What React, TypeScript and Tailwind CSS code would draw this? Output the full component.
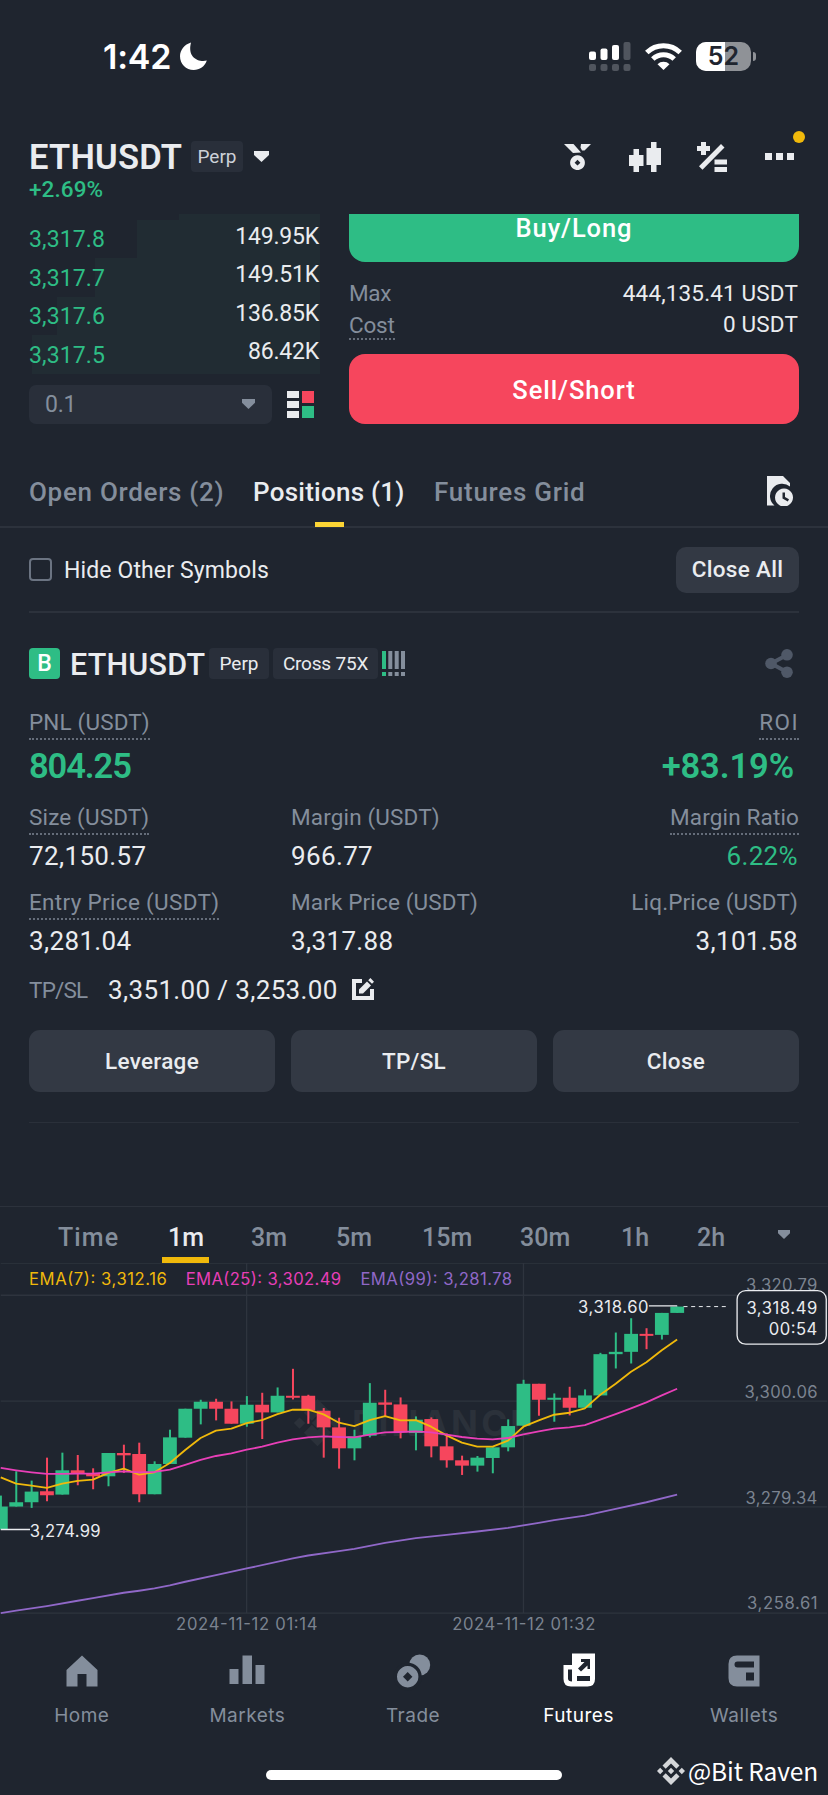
import React from "react";

const UI = "font-[Roboto,'Liberation_Sans',sans-serif]";

/* ---------- chart data: [high, bodyTop, bodyBottom, low, rising] ---------- */
const CANDLES: [number, number, number, number, 0 | 1][] = [
  [918, 951, 1019, 1019, 1], [845, 938, 951, 951, 1], [873, 906, 938, 955, 1], [804, 905, 917, 935, 0],
  [789, 842, 915, 915, 1], [796, 842, 853, 887, 0], [836, 851, 860, 899, 0], [790, 790, 860, 890, 1],
  [765, 790, 797, 850, 0], [759, 793, 914, 938, 0], [815, 823, 914, 914, 1], [720, 743, 823, 823, 1],
  [657, 657, 744, 744, 1], [630, 636, 657, 704, 1], [627, 636, 657, 692, 0], [635, 657, 702, 702, 0],
  [619, 645, 702, 711, 1], [609, 645, 668, 748, 0], [593, 618, 668, 668, 1], [537, 618, 624, 629, 0],
  [615, 618, 662, 702, 0], [655, 663, 713, 804, 0], [684, 713, 776, 837, 0], [720, 740, 776, 812, 1],
  [580, 639, 738, 743, 1], [600, 638, 645, 680, 0], [623, 644, 728, 746, 0], [680, 690, 730, 782, 1],
  [683, 688, 770, 803, 0], [731, 770, 812, 834, 0], [798, 812, 828, 856, 0], [799, 804, 828, 846, 1],
  [773, 773, 805, 851, 1], [689, 709, 773, 785, 1], [570, 582, 708, 708, 1], [582, 582, 630, 678, 0],
  [611, 624, 630, 696, 1], [591, 624, 654, 677, 0], [599, 617, 654, 654, 1], [489, 493, 617, 617, 1],
  [428, 486, 493, 536, 1], [385, 432, 486, 521, 1], [415, 432, 438, 478, 0], [369, 369, 435, 449, 1],
  [350, 350, 369, 369, 1],
];
const STEP = 46.2;
const EMA7 = [863, 882, 888, 895, 882, 874, 870, 850, 837, 855, 848, 820, 781, 745, 723, 717, 700, 691, 673, 660, 660, 674, 699, 709, 691, 679, 692, 691, 711, 737, 759, 771, 771, 753, 711, 692, 675, 669, 656, 615, 582, 546, 517, 481, 449];
const EMA25 = [835, 842, 848, 853, 853, 852, 852, 848, 845, 848, 847, 840, 826, 811, 799, 791, 780, 771, 759, 749, 743, 740, 742, 743, 735, 728, 727, 725, 728, 735, 742, 747, 749, 745, 734, 725, 717, 713, 706, 690, 673, 656, 638, 617, 597];
const EMA99: [number, number][] = [[0, 1271], [1, 1264], [3, 1250], [5, 1234], [6, 1226], [8, 1210], [9, 1204], [10, 1197], [11, 1188], [12, 1177], [14, 1157], [16, 1137], [19, 1107], [20, 1098], [22, 1085], [23, 1078], [25, 1060], [27, 1046], [29, 1036], [31, 1026], [33, 1015], [35, 1000], [36, 992], [38, 978], [40, 958], [42, 938], [44, 915]];
const line = (v: number[]) => v.map((y, i) => `${i * STEP},${y}`).join(" ");

function T({ x, y, w, s = 50, fill, children, weight = 400 }: { x: number; y: number; w: number; s?: number; fill: string; children: string; weight?: number }) {
  return (
    <text x={x} y={y} textLength={w} fontSize={s} fontWeight={weight} fill={fill} fontFamily="Inter, sans-serif">
      {children}
    </text>
  );
}

function Chart() {
  const grey = "#7b8390";
  return (
    <svg viewBox="0 219 2484 1131" className="block h-[377px] w-full">
      <g stroke="#2e343e" strokeWidth="4">
        <path d="M0 219H2484M0 316H2484M0 634H2484M0 952H2484M0 1271H2484M739 219V1271M1571 219V1271" />
      </g>
      <g fill="#2b313a">
        <path d="M952 628l41 41-24 24-17-17-17 17-24-24zM952 770l41-41-24-24-17 17-17-17-24 24zM898 683l17 17-17 17-17-17zM1006 683l17 17-17 17-17-17zM952 683l17 17-17 17-17-17z" />
        <text x="1056" y="738" fontSize="106" fontWeight="700" textLength="540" fontFamily="Inter, sans-serif">BINANCE</text>
      </g>
      {CANDLES.map(([h, t, b, l, up], i) => {
        const c = up ? "#2ebd85" : "#f6465d";
        return (
          <g key={i} fill={c}>
            <rect x={i * STEP - 2.5} y={h} width="6" height={l - h} />
            <rect x={i * STEP - 20.5} y={t} width="41.5" height={b - t} />
          </g>
        );
      })}
      <g fill="none" strokeWidth="5.5" strokeLinejoin="round">
        <polyline points={EMA99.map(([i, y]) => `${i * STEP},${y}`).join(" ")} stroke="#9068c8" />
        <polyline points={line(EMA7)} stroke="#f0b90b" />
        <polyline points={line(EMA25)} stroke="#e83fb8" />
      </g>
      <path d="M0 1020H88M1948 348H2033" stroke="#eaecef" strokeWidth="4" />
      <path d="M2052 350H2182" stroke="#eaecef" strokeWidth="3" strokeDasharray="12 11" />
      <T x={85} y={285} w={414} fill="#f0b90b">EMA(7): 3,312.16</T>
      <T x={556} y={285} w={467} fill="#e83fb8">EMA(25): 3,302.49</T>
      <T x={1081} y={285} w={456} fill="#9068c8">EMA(99): 3,281.78</T>
      <T x={87} y={1041} w={213} fill="#eaecef">3,274.99</T>
      <T x={1735} y={370} w={212} fill="#eaecef">3,318.60</T>
      <T x={2240} y={304} w={214} fill={grey}>3,320.79</T>
      <T x={2235} y={624} w={220} fill={grey}>3,300.06</T>
      <T x={2238} y={943} w={216} fill={grey}>3,279.34</T>
      <T x={2243} y={1260} w={212} fill={grey}>3,258.61</T>
      <T x={527} y={1323} w={425} fill={grey}>2024-11-12 01:14</T>
      <T x={1357} y={1323} w={430} fill={grey}>2024-11-12 01:32</T>
      <rect x="2213" y="302" width="268" height="161" rx="26" fill="#1f252f" stroke="#eaecef" strokeWidth="4" />
      <T x={2241} y={371} w={213} fill="#eaecef">3,318.49</T>
      <T x={2308} y={434} w={146} fill="#eaecef">00:54</T>
    </svg>
  );
}

function Caret({ className }: { className: string }) {
  return (
    <svg viewBox="0 0 15 11" preserveAspectRatio="none" className={className}>
      <path d="M0 0H15V4L7.5 11 0 4z" fill="currentColor" />
    </svg>
  );
}

const BOOK = [
  ["3,317.8", "149.95K", "w-[183px]"],
  ["3,317.7", "149.51K", "w-[225px]"],
  ["3,317.6", "136.85K", "w-[263px]"],
  ["3,317.5", "86.42K", "w-[288px]"],
];

function StatusBar() {
  return (
    <div className="flex h-[113px] items-center pl-[103px] pr-[72px]">
      <span className="font-[Inter,sans-serif] text-[34px] font-semibold tracking-[-0.2px] text-white">1:42</span>
      <svg viewBox="0 0 27 28" className="ml-[9px] h-[28px] w-[27px]">
        <path d="M11 .5C4.500 2.500 0 8 0 14.200 0 22 6 28 13.700 28c6 0 11-3.500 13.100-9.500C19 20.500 7 16 11 .5z" fill="#fff" />
      </svg>
      <div className="ml-auto flex items-center">
        <svg viewBox="0 0 42 29" className="h-[29px] w-[42px]">
          <g fill="#fff">
            <rect x="0" y="9.500" width="7" height="8.500" rx="2" />
            <rect x="11.500" y="6.500" width="7" height="11.500" rx="2" />
            <rect x="23" y="3" width="7" height="15" rx="2" />
          </g>
          <g fill="#50555e">
            <rect x="34.500" y="0" width="7" height="18" rx="2" />
            <rect x="0" y="22" width="7" height="7" rx="2" />
            <rect x="11.500" y="22" width="7" height="7" rx="2" />
            <rect x="23" y="22" width="7" height="7" rx="2" />
            <rect x="34.500" y="22" width="7" height="7" rx="2" />
          </g>
        </svg>
        <svg viewBox="0 0 37 27" className="ml-[14px] h-[27px] w-[37px]">
          <g fill="none" stroke="#fff" strokeWidth="5">
            <path d="M1.800 9.500a24 24 0 0 1 33.400 0" />
            <path d="M7.800 16a15.500 15.500 0 0 1 21.400 0" />
          </g>
          <path d="M12.500 21.200a8.500 8.500 0 0 1 12 0L18.500 27z" fill="#fff" />
        </svg>
        <div className="relative ml-[14px] flex h-[29px] w-[55px] items-center justify-center overflow-hidden rounded-[10px] bg-[#8f9297]">
          <div className="absolute inset-y-0 left-0 w-[29px] bg-white" />
          <span className="relative font-[Inter,sans-serif] text-[25px] font-semibold leading-none text-[#1f252f]">52</span>
        </div>
        <div className="ml-[2px] h-[9px] w-[3px] rounded-r-full bg-[#8f9297]" />
      </div>
    </div>
  );
}

function Header() {
  return (
    <div className="flex h-[89px] flex-col pl-[29px]">
      <div className="flex h-[88px] items-center">
        <span className="w-[152px] whitespace-nowrap pt-[2px] text-[34.500px] font-semibold tracking-[0.2px] text-[#eaecef]">ETHUSDT</span>
        <span className="ml-[10px] flex h-[31px] w-[52px] items-center justify-center rounded bg-[#292f3a] pt-[1px] text-[19px] text-[#cdd1d8]">Perp</span>
        <Caret className="ml-[11px] h-[11px] w-[15px] text-[#eaecef]" />
        <svg viewBox="0 0 27 26" className="ml-[295px] h-[26px] w-[27px] text-[#eaecef]" fill="currentColor">
          <path d="M0 0h9.500L17 8.500 9 9zM17 0h10l-6.500 6.500-2.500 0-1.500-3z" />
          <path fillRule="evenodd" d="M13.500 11.300a7.400 7.400 0 1 0 .01 0zM13.500 15.800l2.900 2.900-2.900 2.900-2.900-2.900z" />
        </svg>
        <svg viewBox="0 0 32 30" className="ml-[38px] h-[30px] w-[32px]" fill="#eaecef">
          <path d="M4.500 7h5.500v6h4.500v11H10v6H4.500v-6H0V13h4.500zM22 0h5.500v6H32v17h-4.500v7H22v-7h-4.500V6H22z" />
        </svg>
        <svg viewBox="0 0 30 30" className="ml-[36px] h-[30px] w-[30px]" fill="#eaecef">
          <path d="M4 0h5v4h4v5H9v4H4V9H0V4h4zM24 2l3.500 3.500L5.500 27.700 2 24.200zM17.500 17.500H30v5H17.500zM17.500 25H30v5H17.500z" />
        </svg>
        <div className="relative ml-[38px] flex gap-[4px]">
          <i className="size-[7px] bg-[#eaecef]" />
          <i className="size-[7px] bg-[#eaecef]" />
          <i className="size-[7px] bg-[#eaecef]" />
          <i className="absolute -top-[22px] left-[28px] size-[12px] rounded-full bg-[#f0b90b]" />
        </div>
      </div>
    </div>
  );
}

function OrderArea() {
  return (
    <div className="flex h-[211px] pl-[29px] pr-[29px]">
      <div className="w-[291px]">
        <div className="flex h-[6px] justify-end"><div className="w-[141px] bg-[#212c33]" /></div>
        {BOOK.map(([p, a, w]) => (
          <div key={p} className="relative flex h-[38.500px] items-center justify-between pr-[1px]">
            <div className={`absolute inset-y-0 right-0 bg-[#212c33] ${w}`} />
            <span className="relative pt-[3px] text-[23px] tracking-[0.1px] text-[#2ebd85]">{p}</span>
            <span className="relative pb-[4px] text-[23px] tracking-[-0.2px] text-[#eaecef]">{a}</span>
          </div>
        ))}
        <div className="mt-[11px] flex items-center">
          <div className="flex h-[39px] w-[243px] items-center justify-between rounded-[7px] bg-[#292f3a] pl-[16px] pr-[17px] text-[#848e9c]">
            <span className="pt-[2px] text-[23px] tracking-[-0.3px]">0.1</span>
            <Caret className="h-[10px] w-[13px]" />
          </div>
          <svg viewBox="0 0 27 27" className="ml-[15px] h-[27px] w-[27px]">
            <path d="M0 0h12v7H0zM0 10h12v7H0zM0 20h12v7H0z" fill="#eaecef" />
            <path d="M15 0h12v12H15z" fill="#f6465d" />
            <path d="M15 15h12v12H15z" fill="#2ebd85" />
          </svg>
        </div>
      </div>
      <div className="ml-[29px] w-[450px] text-[22.500px] text-[#eaecef]">
        <div className="flex h-[48px] items-start justify-center rounded-b-[16px] bg-[#2ebd85] text-[25.500px] font-medium leading-[28px] tracking-[0.9px] text-white">Buy/Long</div>
        <div className="mt-[17px] flex h-[31px] items-center justify-between pr-[1px]">
          <span className="tracking-[-0.3px] text-[#848e9c]">Max</span>
          <span className="tracking-[0.15px]">444,135.41 USDT</span>
        </div>
        <div className="flex h-[31px] items-center justify-between pr-[1px]">
          <span className="h-[30px] border-b-2 border-dotted border-[#656d7a] leading-[31px] tracking-[-0.2px] text-[#848e9c]">Cost</span>
          <span className="tracking-[0.15px]">0 USDT</span>
        </div>
        <div className="mt-[13px] flex h-[70px] items-center justify-center rounded-[16px] bg-[#f6465d] pt-[3px] text-[25.500px] font-medium tracking-[0.9px] text-white">Sell/Short</div>
      </div>
    </div>
  );
}

const Dotted = ({ children, className = "tracking-[0.15px]" }: { children: string; className?: string }) => (
  <span className={`h-[32px] border-b-2 border-dotted border-[#656d7a] leading-[29px] ${className}`}>{children}</span>
);

function Position() {
  return (
    <div className="px-[29px] text-[#eaecef]">
      <div className="flex h-[102px] items-center">
        <span className="flex size-[31px] items-center justify-center rounded-[4px] bg-[#2ebd85] pt-[1px] text-[23px] font-medium text-white">B</span>
        <span className="ml-[10px] w-[136px] whitespace-nowrap pt-[2px] text-[30.500px] font-medium tracking-[0.2px]">ETHUSDT</span>
        <span className="ml-[3px] flex h-[31px] w-[60px] items-center justify-center rounded bg-[#292f3a] pt-[1px] text-[19px]">Perp</span>
        <span className="ml-[4px] flex h-[31px] w-[105px] items-center justify-center rounded bg-[#292f3a] pt-[1px] text-[19px] tracking-[-0.2px]">Cross 75X</span>
        <svg viewBox="0 0 23 25" className="ml-[4px] h-[25px] w-[23px]">
          <path d="M0 0h4v18H0zM0 21h4v4H0z" fill="#2ebd85" />
          <path d="M6.300 0h4v18h-4zM6.300 21h4v4h-4zM12.700 0h4v18h-4zM12.700 21h4v4h-4zM19 0h4v18h-4zM19 21h4v4h-4z" fill="#848e9c" />
        </svg>
        <svg viewBox="0 0 28 29" className="ml-auto mr-[6px] h-[29px] w-[28px]">
          <path d="M22 6L6 14.500 22 23" fill="none" stroke="#4f5867" strokeWidth="4" />
          <g fill="#4f5867"><circle cx="22" cy="5.800" r="5.800" /><circle cx="6" cy="14.500" r="5.800" /><circle cx="22" cy="23.200" r="5.800" /></g>
        </svg>
      </div>
      <div className="mt-[-7px] flex h-[32px] justify-between text-[22.500px] text-[#848e9c]">
        <Dotted>PNL (USDT)</Dotted>
        <Dotted className="tracking-[1.4px]">ROI</Dotted>
      </div>
      <div className="flex h-[50px] items-center justify-between pr-[5px] pt-[3px] text-[34.500px] font-semibold text-[#2ebd85]">
        <span className="tracking-[-1.1px]">804.25</span>
        <span className="tracking-[-0.1px]">+83.19%</span>
      </div>
      <div className="mt-[13px] grid grid-cols-[262px_262px_1fr] text-[22.500px] text-[#848e9c]">
        <div className="flex"><Dotted>Size (USDT)</Dotted></div>
        <div className="leading-[29px] tracking-[0.15px]">Margin (USDT)</div>
        <div className="flex justify-end"><Dotted className="tracking-[0.15px]">Margin Ratio</Dotted></div>
      </div>
      <div className="grid h-[40px] grid-cols-[262px_262px_1fr] items-center pt-[2px] text-[26px] tracking-[0.36px]">
        <span>72,150.57</span>
        <span>966.77</span>
        <span className="pr-[1px] text-right text-[#2ebd85]">6.22%</span>
      </div>
      <div className="mt-[13px] grid grid-cols-[262px_262px_1fr] text-[22.500px] text-[#848e9c]">
        <div className="flex"><Dotted className="tracking-[0.32px]">Entry Price (USDT)</Dotted></div>
        <div className="leading-[29px] tracking-[0.15px]">Mark Price (USDT)</div>
        <div className="pr-[1px] text-right leading-[29px] tracking-[0.15px]">Liq.Price (USDT)</div>
      </div>
      <div className="grid h-[40px] grid-cols-[262px_262px_1fr] items-center pt-[2px] text-[26px] tracking-[0.36px]">
        <span>3,281.04</span>
        <span>3,317.88</span>
        <span className="pr-[1px] text-right">3,101.58</span>
      </div>
      <div className="mt-[11px] flex h-[40px] items-center">
        <span className="w-[79px] text-[22.500px] tracking-[-0.8px] text-[#848e9c]">TP/SL</span>
        <span className="w-[229px] whitespace-nowrap text-[26px] tracking-[0.36px]">3,351.00 / 3,253.00</span>
        <svg viewBox="0 0 22 22" className="mb-[4px] ml-[15px] h-[22px] w-[22px]" fill="#eaecef">
          <path d="M0 1h10v4H4v13h14v-7h4v11H0z" />
          <path d="M7 11.500L15 3.500l4 4-8 8H7zM16.200 2.200L18.400 0 22 3.800l-2 2z" />
        </svg>
      </div>
      <div className="mt-[19px] grid grid-cols-3 gap-[16px] text-[22.500px] font-medium">
        {["Leverage", "TP/SL", "Close"].map((b) => (
          <div key={b} className="flex h-[62px] items-center justify-center rounded-[11px] bg-[#333944] pt-[2px] tracking-[0.3px]">{b}</div>
        ))}
      </div>
      <div className="mt-[30px] h-px bg-[#2a303a]" />
    </div>
  );
}

const NAV_ICONS: Record<string, React.ReactNode> = {
  Home: <path d="M20 4.500L35.500 19v16.500h-11V23h-9v12.500h-11V19z" />,
  Markets: <path d="M2.500 18h9v15h-9zM15.500 4.500h9.500V33h-9.500zM28.500 14h9v19h-9z" />,
  Trade: (
    <>
      <circle cx="26.700" cy="14" r="10.500" />
      <circle cx="14.700" cy="25.700" r="14" fill="#1f252f" />
      <path fillRule="evenodd" d="M14.700 15a10.700 10.700 0 1 0 .01 0zM14.700 21l4.700 4.700-4.700 4.700-4.700-4.700z" />
    </>
  ),
  Futures: (
    <path fillRule="evenodd" d="M13 2.500h23V28q0 7.500-7.500 7.500H12Q4.500 35.500 4.500 28V14H13zM9 18.500v9q0 3 4 3V18.500zM18 25v5h13v-5zM22 8v3h3.500L19 17.500l3 3 6.500-6V18H31V8z" />
  ),
  Wallets: <path fillRule="evenodd" d="M13 4.500h22.500v31H13q-8.500 0-8.500-8.500V13Q4.500 4.500 13 4.500zM13.500 10.500a3 3 0 0 0 0 6H30v-6zM22 21.500v8h8v-8z" />,
};

function BottomNav() {
  return (
    <div className="-ml-px mr-px grid h-[121px] grid-cols-5 pt-[12px]">
      {Object.keys(NAV_ICONS).map((n) => (
        <div key={n} className={`flex flex-col items-center ${n === "Futures" ? "text-white" : "text-[#848e9c]"}`}>
          <svg viewBox="0 0 40 40" className="size-[40px]" fill="currentColor">{NAV_ICONS[n]}</svg>
          <span className="mt-[13px] font-[Inter,sans-serif] text-[19px] leading-[24px] tracking-[0.5px]">{n}</span>
        </div>
      ))}
    </div>
  );
}

const TIMES = [
  ["Time", "w-[110px] tracking-[1.1px]"], ["1m", "w-[83px]"], ["3m", "w-[85px]"], ["5m", "w-[86px]"], ["15m", "w-[98px]"], ["30m", "w-[101px]"], ["1h", "w-[76px]"], ["2h", "w-[81px]"],
];

export default function App() {
  return (
    <div className={`flex h-[1795px] w-[828px] flex-col overflow-hidden bg-[#1f252f] ${UI}`}>
      <StatusBar />
      <Header />
      <div className="-mt-[29px] mb-[7px] flex h-[34px] items-center pl-[29px] text-[22.500px] font-medium tracking-[0.1px] text-[#2ebd85]">+2.69%</div>
      <OrderArea />
      <div className="mt-[36px] flex h-[68px] border-b-2 border-[#2c323c] pl-[29px] text-[26px] font-medium leading-[64px] text-[#848e9c]">
        <span className="w-[224px] tracking-[0.7px]">Open Orders (2)</span>
        <span className="relative w-[181px] tracking-[0.25px] text-[#eaecef]">
          Positions (1)
          <i className="absolute -bottom-px left-[62px] h-[5px] w-[29px] bg-[#fcd535]" />
        </span>
        <span className="w-[333px] tracking-[0.75px]">Futures Grid</span>
        <svg viewBox="0 0 26 30" className="mt-[16px] h-[30px] w-[26px]" fill="#eaecef">
          <path d="M0 0h16l7 7v3.500A11 11 0 0 0 7.500 29.500H0z" />
          <path fillRule="evenodd" d="M17 12.500a9 9 0 1 0 .01 0zM15.500 16.500H18V21l4 2.200-1.200 2.300-5.300-3z" />
        </svg>
      </div>
      <div className="mx-[29px] flex h-[85px] items-center border-b-2 border-[#2c323c] text-[#eaecef]">
        <span className="size-[23px] rounded-[4px] border-2 border-[#6b7482]" />
        <span className="ml-[12px] pt-[3px] text-[23px] tracking-[0.12px]">Hide Other Symbols</span>
        <span className="ml-auto flex h-[46px] w-[123px] items-center justify-center rounded-[10px] bg-[#333944] pt-[1px] text-[22.500px] font-medium tracking-[0.3px]">Close All</span>
      </div>
      <Position />
      <div className="mt-[83px] flex h-[57px] border-t border-[#2c323c] pl-[58px] text-[25px] font-medium leading-[62px] text-[#848e9c]">
        {TIMES.map(([t, w]) => (
          <span key={t} className={`relative ${w} ${t === "1m" ? "text-[#eaecef]" : ""}`}>
            {t}
            {t === "1m" && <i className="absolute -left-[6px] bottom-0 h-[6px] w-[47px] bg-[#f0b90b]" />}
          </span>
        ))}
        <Caret className="mt-[23px] h-[9px] w-[12px]" />
      </div>
      <Chart />
      <BottomNav />
      <div className="flex h-[35px] items-start">
        <div className="ml-[266px] mt-[10px] h-[10px] w-[296px] rounded-full bg-white" />
        <svg viewBox="0 0 28 28" className="ml-[95px] mt-[-3px] h-[28px] w-[28px]" fill="#d4d6d9">
          <path d="M14 0l8.500 8.500-3.200 3.200L14 6.400l-5.300 5.300-3.200-3.200zM14 28l8.500-8.500-3.200-3.200L14 21.600l-5.300-5.300-3.200 3.200zM3.200 10.800L6.400 14l-3.200 3.200L0 14zM24.800 10.800L28 14l-3.200 3.200-3.200-3.200zM14 10.800l3.200 3.200-3.200 3.200-3.200-3.200z" />
        </svg>
        <span className="ml-[3px] mt-[-5px] whitespace-nowrap font-['Noto_Sans_CJK_SC',sans-serif] text-[24.500px] leading-[32px] tracking-[-0.1px] text-white">@Bit Raven</span>
      </div>
    </div>
  );
}
